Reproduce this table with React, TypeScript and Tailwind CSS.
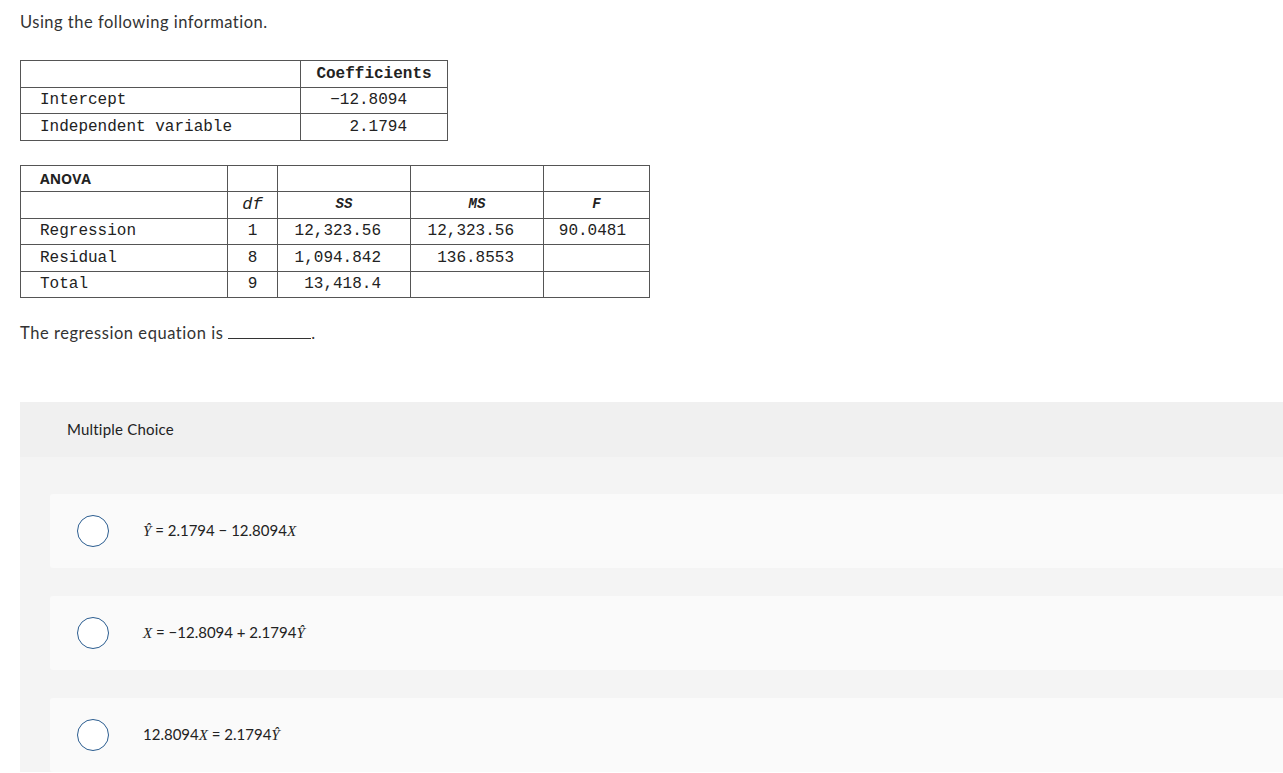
import React from 'react';

const mono = { fontFamily: '"Liberation Mono", "DejaVu Sans Mono", monospace' };

const coefRows = [
  { label: 'Intercept', value: '−12.8094' },
  { label: 'Independent variable', value: '2.1794' },
];

const anovaRows = [
  { label: 'Regression', df: '1', ss: '12,323.56', ms: '12,323.56', f: '90.0481' },
  { label: 'Residual', df: '8', ss: '1,094.842', ms: '136.8553', f: '' },
  { label: 'Total', df: '9', ss: '13,418.4', ms: '', f: '' },
];

const Yhat = () => (
  <span className="italic" style={{ fontFamily: '"Liberation Serif", serif' }}>
    Y&#770;
  </span>
);

const X = () => (
  <span className="italic" style={{ fontFamily: '"Liberation Serif", serif' }}>
    X
  </span>
);

const options: React.ReactNode[] = [
  <>
    <Yhat /> = 2.1794 − 12.8094<X />
  </>,
  <>
    <X /> = −12.8094 + 2.1794<Yhat />
  </>,
  <>
    12.8094<X /> = 2.1794<Yhat />
  </>,
];

const cell = 'border border-[#555] h-[26.5px] p-0';

const App: React.FC = () => {
  return (
    <div className="min-h-screen bg-white text-[#333] overflow-hidden" style={{ fontFamily: 'Lato, "Open Sans", sans-serif' }}>
      <div className="pl-[20px] pt-[11px]">
        <p className="text-[16.5px] leading-[22px] tracking-[0.5px]">Using the following information.</p>

        <table className="mt-[27px] border-collapse text-[#222] text-[16px]" style={mono}>
          <tbody>
            <tr>
              <td className={`${cell} w-[280px]`}></td>
              <td className={`${cell} w-[147px] text-center font-bold`}>Coefficients</td>
            </tr>
            {coefRows.map(r => (
              <tr key={r.label}>
                <td className={`${cell} pl-[19px]`}>{r.label}</td>
                <td className={`${cell} text-right pr-[40px]`}>{r.value}</td>
              </tr>
            ))}
          </tbody>
        </table>

        <table className="mt-[24px] border-collapse text-[#222] text-[16px]" style={mono}>
          <tbody>
            <tr>
              <td className={`${cell} w-[207px] pl-[19px] text-[14px] font-bold`} style={{ fontFamily: '"Open Sans", sans-serif' }}>
                ANOVA
              </td>
              <td className={`${cell} w-[50px]`}></td>
              <td className={`${cell} w-[133px]`}></td>
              <td className={`${cell} w-[133px]`}></td>
              <td className={`${cell} w-[106px]`}></td>
            </tr>
            <tr>
              <td className={cell}></td>
              <td className={`${cell} text-center italic text-[17px]`}>df</td>
              <td className={`${cell} text-center italic font-bold text-[14px]`}>SS</td>
              <td className={`${cell} text-center italic font-bold text-[14px]`}>MS</td>
              <td className={`${cell} text-center italic font-bold text-[14px]`}>F</td>
            </tr>
            {anovaRows.map(r => (
              <tr key={r.label}>
                <td className={`${cell} pl-[19px]`}>{r.label}</td>
                <td className={`${cell} text-center`}>{r.df}</td>
                <td className={`${cell} text-right pr-[29px]`}>{r.ss}</td>
                <td className={`${cell} text-right pr-[29px]`}>{r.ms}</td>
                <td className={`${cell} text-right pr-[23px]`}>{r.f}</td>
              </tr>
            ))}
          </tbody>
        </table>

        <p className="mt-[24px] text-[16.5px] leading-[22px] tracking-[0.55px]">
          The regression equation is <span className="inline-block w-[83px] border-b border-[#333]"></span>.
        </p>

        <div className="mt-[58px] bg-[#f4f4f4]">
          <div className="h-[55px] bg-[#f0f0f0] flex items-center pl-[47px] text-[15px] text-[#222] tracking-[0.2px]">
            Multiple Choice
          </div>
          <div className="pt-[37px] pl-[30px] flex flex-col gap-[28px]">
            {options.map((opt, i) => (
              <div key={i} className="h-[74px] bg-[#fafafa] rounded-l-[3px] flex items-center">
                <div className="ml-[27px] w-[32px] h-[32px] rounded-full border-[1.5px] border-[#2b5d90] bg-white"></div>
                <div className="ml-[34px] text-[15px] text-[#222]">{opt}</div>
              </div>
            ))}
          </div>
        </div>
      </div>
    </div>
  );
};

export default App;
